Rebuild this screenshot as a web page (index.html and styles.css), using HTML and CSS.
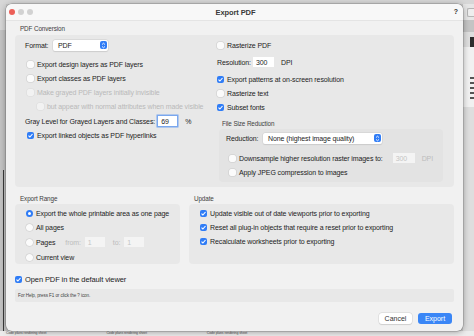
FILE: index.html
```html
<!DOCTYPE html>
<html lang="en">
<head>
    <meta charset="UTF-8">
    <title>Export PDF</title>
    <link rel="stylesheet" href="styles.css">
</head>
<body>
    <!-- application behind the sheet -->
    <div class="app">
        <div class="app-top"></div>
        <div class="app-mid">
            <div class="app-left">
                <div class="al-top"></div>
                <div class="al-line"></div>
            </div>
            <div class="app-gap"></div>
            <div class="app-right">
                <div class="ar-tool"><span class="ar-btn"></span></div>
                <div class="ar-band"></div>
                <div class="ar-icon"></div>
                <div class="ar-panel">
                    <span></span><span></span><span></span><span></span><span></span>
                </div>
            </div>
        </div>
        <div class="app-bottom">
            <span>Code plans rendering sheet</span>
            <span>Code plans rendering sheet</span>
            <span>Code plans rendering sheet</span>
        </div>
    </div>

    <div class="dialog">
        <div class="titlebar">
            <div class="lights">
                <span class="light red"></span>
                <span class="light"></span>
                <span class="light"></span>
            </div>
            <div class="title">Export PDF</div>
            <div class="help">?</div>
        </div>

        <div class="content">
            <div class="group-label">PDF Conversion</div>
            <div class="group conv">
                <div class="col-left">
                    <div class="row format-row">
                        <span class="field-label">Format:</span>
                        <div class="select select-pdf">PDF<span class="stepper"><svg width="5" height="7" viewBox="0 0 5 7"><path d="M1 2.6 2.5 1.2 4 2.6M1 4.4 2.5 5.8 4 4.4" fill="none" stroke="#fff" stroke-width="0.9"/></svg></span></div>
                    </div>
                    <div class="row cb-row first"><span class="cb"></span>Export design layers as PDF layers</div>
                    <div class="row cb-row"><span class="cb"></span>Export classes as PDF layers</div>
                    <div class="row cb-row disabled"><span class="cb"></span>Make grayed PDF layers initially invisible</div>
                    <div class="row cb-row disabled indent"><span class="cb"></span>but appear with normal attributes when made visible</div>
                    <div class="row gray-row">
                        <span>Gray Level for Grayed Layers and Classes:</span>
                        <span class="input focus">69</span>
                        <span class="pct">%</span>
                    </div>
                    <div class="row cb-row"><span class="cb on"><svg width="7" height="7" viewBox="0 0 7 7"><path d="M1.5 3.6 2.9 5 5.5 2" fill="none" stroke="#fff" stroke-width="1.1"/></svg></span>Export linked objects as PDF hyperlinks</div>
                </div>

                <div class="col-right">
                    <div class="row cb-row top"><span class="cb"></span>Rasterize PDF</div>
                    <div class="row res-row">
                        <span>Resolution:</span>
                        <span class="input res">300</span>
                        <span class="dpi">DPI</span>
                    </div>
                    <div class="row cb-row gap3"><span class="cb on"><svg width="7" height="7" viewBox="0 0 7 7"><path d="M1.5 3.6 2.9 5 5.5 2" fill="none" stroke="#fff" stroke-width="1.1"/></svg></span>Export patterns at on-screen resolution</div>
                    <div class="row cb-row"><span class="cb"></span>Rasterize text</div>
                    <div class="row cb-row"><span class="cb on"><svg width="7" height="7" viewBox="0 0 7 7"><path d="M1.5 3.6 2.9 5 5.5 2" fill="none" stroke="#fff" stroke-width="1.1"/></svg></span>Subset fonts</div>

                    <div class="group-label sub-label">File Size Reduction</div>
                    <div class="group sub">
                        <div class="row red-row">
                            <span class="field-label red-label">Reduction:</span>
                            <div class="select select-red">None (highest image quality)<span class="stepper"><svg width="5" height="7" viewBox="0 0 5 7"><path d="M1 2.6 2.5 1.2 4 2.6M1 4.4 2.5 5.8 4 4.4" fill="none" stroke="#fff" stroke-width="0.9"/></svg></span></div>
                        </div>
                        <div class="row cb-row down-row">
                            <span class="cb"></span>Downsample higher resolution raster images to:
                            <span class="input dis-input">300</span>
                            <span class="dis-text">DPI</span>
                        </div>
                        <div class="row cb-row"><span class="cb"></span>Apply JPEG compression to images</div>
                    </div>
                </div>
            </div>

            <div class="bottom-groups">
                <div class="section range">
                    <div class="group-label">Export Range</div>
                    <div class="group range-box">
                        <div class="row cb-row"><span class="radio on"></span>Export the whole printable area as one page</div>
                        <div class="row cb-row"><span class="radio"></span>All pages</div>
                        <div class="row cb-row pages-row">
                            <span class="radio"></span>Pages
                            <span class="dis-text from">from:</span>
                            <span class="input dis-input small">1</span>
                            <span class="dis-text to">to:</span>
                            <span class="input dis-input small">1</span>
                        </div>
                        <div class="row cb-row"><span class="radio"></span>Current view</div>
                    </div>
                </div>
                <div class="section update">
                    <div class="group-label">Update</div>
                    <div class="group update-box">
                        <div class="row cb-row"><span class="cb on"><svg width="7" height="7" viewBox="0 0 7 7"><path d="M1.5 3.6 2.9 5 5.5 2" fill="none" stroke="#fff" stroke-width="1.1"/></svg></span>Update visible out of date viewports prior to exporting</div>
                        <div class="row cb-row"><span class="cb on"><svg width="7" height="7" viewBox="0 0 7 7"><path d="M1.5 3.6 2.9 5 5.5 2" fill="none" stroke="#fff" stroke-width="1.1"/></svg></span>Reset all plug-in objects that require a reset prior to exporting</div>
                        <div class="row cb-row"><span class="cb on"><svg width="7" height="7" viewBox="0 0 7 7"><path d="M1.5 3.6 2.9 5 5.5 2" fill="none" stroke="#fff" stroke-width="1.1"/></svg></span>Recalculate worksheets prior to exporting</div>
                    </div>
                </div>
            </div>

            <div class="row cb-row open-row"><span class="cb on"><svg width="7" height="7" viewBox="0 0 7 7"><path d="M1.5 3.6 2.9 5 5.5 2" fill="none" stroke="#fff" stroke-width="1.1"/></svg></span>Open PDF in the default viewer</div>

            <div class="helpbar">For Help, press F1 or click the ? icon.</div>

            <div class="buttons">
                <button class="btn">Cancel</button>
                <button class="btn primary">Export</button>
            </div>
        </div>
    </div>
</body>
</html>
```

FILE: styles.css
```css
* {
    box-sizing: border-box;
}
body {
    margin: 0;
    width: 474px;
    height: 336px;
    overflow: hidden;
    position: relative;
    background: #c6c6c6;
    font-family: "Liberation Sans", Arial, sans-serif;
    font-size: 7px;
    letter-spacing: -0.1px;
    color: #1c1c1c;
}

/* app behind */
.app {
    height: 336px;
    display: flex;
    flex-direction: column;
}
.app-top {
    height: 4px;
    background: #d7d7d7;
}
.app-mid {
    flex: 1;
    display: flex;
}
.app-left {
    width: 6px;
    display: flex;
    flex-direction: column;
    background: #c3c3c3;
}
.al-top {
    height: 26px;
    background: #d6d6d6;
}
.al-line {
    margin-top: 140px;
    margin-left: 3px;
    width: 1px;
    flex: 1;
    background: #3a3a3a;
}
.app-gap {
    flex: 1;
}
.app-right {
    width: 11px;
    background: #dedede;
    display: flex;
    flex-direction: column;
}
.ar-tool {
    height: 16px;
    background: #e6e6e6;
    padding: 4px 0 0 4px;
}
.ar-btn {
    display: block;
    height: 9px;
    border: 1px solid #b5b5b5;
    border-right: none;
    border-radius: 2px 0 0 2px;
    background: #eee;
}
.ar-band {
    height: 12px;
    background: #c4c4c4;
}
.ar-icon {
    height: 10px;
    margin: 5px 0 0 7px;
    background: #2e2e2e;
}
.ar-panel {
    height: 60px;
    background: #f1f1f1;
    padding: 30px 0 0 7px;
    display: flex;
    flex-direction: column;
    gap: 3px;
}
.ar-panel span {
    height: 2px;
    background: #555;
}
.app-bottom {
    height: 5px;
    background: #ececec;
    display: flex;
    gap: 60px;
    padding-left: 6px;
    font-size: 3.5px;
    line-height: 5px;
    color: #555;
}

/* dialog */
.dialog {
    position: absolute;
    left: 6px;
    top: 4px;
    width: 457px;
    height: 327px;
    background: #f1f1f1;
    border-radius: 6px;
    box-shadow: 0 1px 6px rgba(0, 0, 0, 0.35), 0 0 0 0.5px rgba(0, 0, 0, 0.25);
    overflow: hidden;
}
.titlebar {
    height: 17px;
    background: #f8f8f8;
    border-bottom: 1px solid #e4e4e4;
    position: relative;
    display: flex;
    align-items: center;
    justify-content: center;
}
.lights {
    position: absolute;
    left: 3px;
    top: 5px;
    display: flex;
    gap: 3px;
}
.light {
    width: 6px;
    height: 6px;
    border-radius: 50%;
    background: #d2d2d2;
}
.light.red {
    background: #ec5f58;
}
.title {
    font-size: 7.5px;
    font-weight: bold;
    color: #3a3a3a;
    margin-left: 2px;
}
.help {
    position: absolute;
    right: 5px;
    top: 4px;
    font-size: 7px;
    font-weight: bold;
    color: #333;
}

.content {
    padding: 3px 9px 0 9px;
}
.group-label {
    height: 10px;
    line-height: 10px;
    padding-left: 5px;
    font-size: 6.3px;
    color: #404040;
    margin-bottom: 1px;
}
.group {
    background: #e8e8e8;
    border-radius: 4px;
}

.row {
    display: flex;
    align-items: center;
    height: 14px;
    white-space: nowrap;
}
.cb-row {
    padding-left: 2px;
}
.cb {
    width: 7px;
    height: 7px;
    border-radius: 2px;
    background: #fbfbfb;
    box-shadow: 0 0 0 0.5px #c9c9c9;
    margin-right: 3px;
    flex: none;
    display: flex;
}
.cb.on {
    background: #2f7cf6;
    box-shadow: none;
}
.radio {
    width: 7px;
    height: 7px;
    border-radius: 50%;
    background: #fbfbfb;
    box-shadow: 0 0 0 0.5px #c9c9c9;
    margin-right: 3px;
    flex: none;
}
.radio.on {
    background: #fff;
    border: 2px solid #2f7cf6;
    box-shadow: none;
}
.disabled {
    color: #b9b9b9;
}
.disabled .cb {
    background: #f2f2f2;
    box-shadow: 0 0 0 0.5px #dadada;
}
.indent {
    padding-left: 12px;
}

/* pdf conversion */
.conv {
    height: 152px;
    display: flex;
    padding: 4px 0 0 10px;
}
.col-left {
    width: 192px;
}
.col-right {
    flex: 1;
}
.format-row {
    height: 12px;
}
.field-label {
    width: 28px;
}
.select {
    height: 11px;
    background: #fff;
    border-radius: 2px;
    box-shadow: 0 0 0 0.5px #d0d0d0, 0 0.5px 1px rgba(0, 0, 0, 0.12);
    display: flex;
    align-items: center;
    padding-left: 5px;
    position: relative;
}
.select-pdf {
    width: 55px;
}
.stepper {
    position: absolute;
    right: 1px;
    top: 1.5px;
    width: 7px;
    height: 8px;
    border-radius: 2px;
    background: #2f7cf6;
    display: flex;
    align-items: center;
    justify-content: center;
}
.first {
    margin-top: 6px;
}
.gray-row {
    margin-top: 1px;
}
.input {
    height: 10px;
    background: #fff;
    display: flex;
    align-items: center;
    padding-left: 3px;
}
.input.focus {
    width: 19px;
    margin-left: 3px;
    box-shadow: 0 0 0 1.5px #7aa7ee;
}
.pct {
    margin-left: 8px;
}

.top {
    height: 12px;
    padding-left: 0;
}
.col-right .cb-row {
    padding-left: 0;
}
.res-row {
    margin-top: 4px;
}
.input.res {
    width: 21px;
    margin-left: 2px;
}
.dpi {
    margin-left: 7px;
}
.gap3 {
    margin-top: 3px;
}
.sub-label {
    margin-top: 5px;
    margin-bottom: 0;
}
.sub {
    height: 53px;
    width: 224px;
    margin-left: 2px;
    background: #e3e3e3;
    padding-top: 3px;
}
.red-row {
    height: 12px;
    padding-left: 7px;
}
.red-label {
    width: 37px;
}
.select-red {
    width: 119px;
}
.col-right .down-row {
    margin-top: 7px;
    padding-left: 10px;
}
.sub .cb-row {
    padding-left: 10px;
}
.dis-input {
    background: #f4f4f4;
    color: #c4c4c4;
    width: 22px;
    margin-left: 10px;
}
.dis-text {
    color: #bcbcbc;
    margin-left: 7px;
}

/* bottom groups */
.bottom-groups {
    display: flex;
    gap: 9px;
    margin-top: 7px;
}
.bottom-groups .group-label {
    margin-bottom: 0;
}
.range {
    width: 165px;
}
.update {
    flex: 1;
}
.range-box,
.update-box {
    height: 60px;
    padding: 2px 0 0 9px;
}
.pages-row {
    height: 16px;
}
.from {
    margin-left: 10px;
}
.dis-input.small {
    width: 20px;
    margin-left: 4px;
}
.to {
    margin-left: 8px;
}
.update-box .cb-row {
    padding-left: 2px;
}

.open-row {
    margin-top: 8px;
    padding-left: 0;
    font-size: 7.5px;
}
.helpbar {
    margin-top: 3px;
    height: 13px;
    background: #e8e8e8;
    border-radius: 2px;
    font-size: 4.6px;
    line-height: 13px;
    padding-left: 3px;
    color: #444;
}
.buttons {
    display: flex;
    justify-content: flex-end;
    gap: 6px;
    margin-top: 11px;
    padding-right: 2px;
}
.btn {
    height: 11px;
    width: 33px;
    padding: 0;
    border: none;
    border-radius: 3px;
    font-family: "Liberation Sans", Arial, sans-serif;
    font-size: 7px;
    background: #fff;
    color: #333;
    box-shadow: 0 0 0 0.5px #d3d3d3, 0 0.5px 1px rgba(0, 0, 0, 0.15);
}
.btn.primary {
    width: 34px;
    background: #3a86f6;
    color: #fff;
    box-shadow: none;
}
```
